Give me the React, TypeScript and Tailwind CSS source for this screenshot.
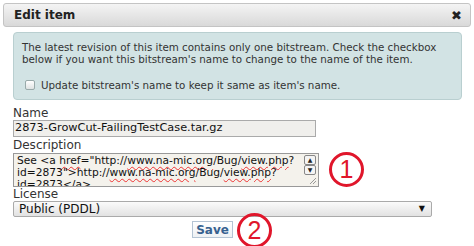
import React from "react";

const font = { fontFamily: '"DejaVu Sans", Verdana, sans-serif' };

function Circled({ n }: { n: string }) {
  return (
    <div className="flex h-[35px] w-[35px] shrink-0 items-center justify-center rounded-full border-[3px] border-[#e0162b] text-[25px] leading-none text-[#e0162b]" style={{ fontFamily: '"Liberation Sans", Arial, sans-serif' }}>
      {n}
    </div>
  );
}

function Spell({ children }: { children: React.ReactNode }) {
  return <span className="underline decoration-wavy decoration-[#e33] decoration-1 underline-offset-2">{children}</span>;
}

export default function App() {
  return (
    <div className="h-[246px] w-[474px] overflow-hidden bg-white text-[#222]" style={font}>
      <div className="px-[3px] pt-[3px]">
        {/* header */}
        <div className="flex h-[24px] items-center justify-between rounded-[3px] border border-[#c4c4c4] bg-gradient-to-b from-[#f4f4f4] to-[#d9d9d9] pl-[10px] pr-[8px]">
          <span className="text-[12px] font-bold text-[#222]">Edit item</span>
          <span className="text-[13px] font-bold leading-none text-[#222]">✖</span>
        </div>

        <div className="pl-[10px] pr-[9px] pt-[5px]">
          {/* info */}
          <div className="rounded-[4px] border border-[#b9cfd0] bg-[#d2e3e4] pb-[8px] pl-[8px] pr-[4px] pt-[8px] text-[10.3px] leading-[12px] text-[#333]">
            <p>
              The latest revision of this item contains only one bitstream. Check the checkbox below if you want this bitstream's name to change to the name of the item.
            </p>
            <label className="mt-[14px] flex items-center gap-[6px] pl-[3px]">
              <span className="inline-block h-[10px] w-[10px] rounded-[2px] border border-[#9aa] bg-gradient-to-b from-white to-[#dfe3e3]" />
              <span>Update bitstream's name to keep it same as item's name.</span>
            </label>
          </div>

          {/* form */}
          <div className="mt-[7px] text-[12px]">
            <div className="leading-[13px] text-[#333]">Name</div>
            <div className="flex h-[17px] w-[303px] items-center border border-[#aaa] bg-[#f0efec] pl-[1px] text-[11.3px] text-[#111]">
              2873-GrowCut-FailingTestCase.tar.gz
            </div>
            <div className="mt-[2px] leading-[13px] text-[#333]">Description</div>
            <div className="flex items-center gap-[10px]">
              <div className="relative h-[34px] w-[306px] overflow-hidden border border-[#999] bg-[#f4f2ec]">
                <div className="pl-[3px] pr-[18px] pt-[1px] text-[10.7px] leading-[12px] text-[#111]">
                  <div className="whitespace-nowrap">See &lt;a <Spell>href</Spell>="http://<Spell>www.na-mic.org</Spell>/Bug/<Spell>view.php</Spell>?</div>
                  <div className="whitespace-nowrap">id=2873"&gt;http://<Spell>www.na-mic.org</Spell>/Bug/<Spell>view.php</Spell>?</div>
                  <div className="whitespace-nowrap">id=2873&lt;/a&gt;</div>
                </div>
                <div className="absolute right-[2px] top-[1px] flex w-[12px] flex-col">
                  <div className="flex h-[10px] items-center justify-center rounded-[2px] border border-[#888] bg-[#f4f4f4] text-[6px] leading-none">▲</div>
                  <div className="flex h-[10px] items-center justify-center rounded-[2px] border border-[#888] bg-[#f4f4f4] text-[6px] leading-none">▼</div>
                </div>
                <svg className="absolute bottom-[1px] right-[1px]" width="8" height="8" viewBox="0 0 8 8">
                  <path d="M7 1 L1 7 M7 4 L4 7" stroke="#999" strokeWidth="1" />
                </svg>
              </div>
              <Circled n="1" />
            </div>
            <div className="mt-[1px] leading-[13px] text-[#333]">License</div>
            <div className="flex h-[16px] w-[419px] items-center justify-between rounded-[2px] border border-[#aaa] bg-gradient-to-b from-[#fbfbfb] to-[#e2e2e2] pl-[5px] pr-[6px] text-[12px] text-[#111]">
              <span>Public (PDDL)</span>
              <span className="text-[8px] leading-none">▼</span>
            </div>
            <div className="flex items-start pl-[179px] pt-[3px]">
              <div className="mt-[1px] flex h-[17px] w-[41px] items-center justify-center border border-[#b4c4d4] bg-gradient-to-b from-white to-[#eef1f4] text-[12px] font-bold text-[#36618f]">
                Save
              </div>
              <div className="-mt-[7px] ml-[4px]">
                <Circled n="2" />
              </div>
            </div>
          </div>
        </div>
      </div>
    </div>
  );
}
